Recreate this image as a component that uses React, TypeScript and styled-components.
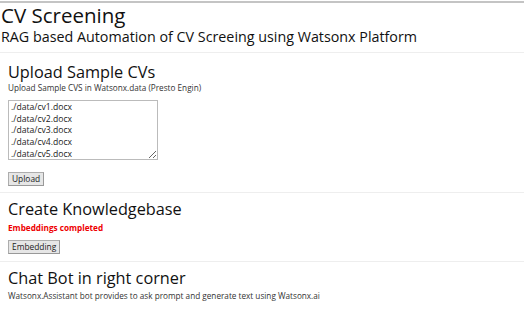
import styled, { createGlobalStyle } from 'styled-components';

const GlobalStyle = createGlobalStyle`
  html, body {
    margin: 0;
    padding: 0;
    background: #fff;
  }
  body {
    font-family: "Open Sans", "Noto Sans", sans-serif;
    color: #222;
  }
`;

const Page = styled.div`
  width: 524px;
  border-top: 2px solid #c4c4c4;
  margin-top: 1px;
`;

const Header = styled.header`
  padding: 0 0 6px 1px;
  border-bottom: 1px solid #eeeeee;
`;

const Title = styled.h1`
  margin: 0;
  font-size: 20.5px;
  font-weight: 400;
  line-height: 25px;
  color: #111;
`;

const Subtitle = styled.h2`
  margin: 0;
  font-size: 14.3px;
  font-weight: 400;
  line-height: 18px;
  color: #111;
`;

const Section = styled.section<{ $top: number; $bottom: number }>`
  padding: ${(p) => p.$top}px 0 ${(p) => p.$bottom}px 8px;
  border-bottom: 1px solid #eeeeee;
  display: flex;
  flex-direction: column;
  align-items: flex-start;

  &:last-child {
    border-bottom: none;
  }
`;

const SectionTitle = styled.h3`
  margin: 0;
  font-size: 16.3px;
  font-weight: 400;
  line-height: 21px;
  color: #111;
`;

const Note = styled.p<{ $alert?: boolean; $gap?: number }>`
  margin: ${(p) => p.$gap ?? 0}px 0 0;
  font-size: 8.2px;
  line-height: 10px;
  font-weight: ${(p) => (p.$alert ? 700 : 400)};
  color: ${(p) => (p.$alert ? '#ee0000' : '#333')};
  white-space: nowrap;
`;

const FileList = styled.textarea`
  margin-top: 7px;
  width: 150px;
  height: 60px;
  box-sizing: border-box;
  padding: 1px 2px;
  border: 1px solid #bbb;
  font-family: "Open Sans", sans-serif;
  font-size: 8.6px;
  line-height: 11.7px;
  color: #222;
  resize: vertical;
  overflow: hidden;
`;

const Button = styled.button<{ $gap: number }>`
  margin-top: ${(p) => p.$gap}px;
  padding: 0 3px;
  height: 14px;
  font-family: "Open Sans", sans-serif;
  font-size: 8.4px;
  line-height: 12px;
  color: #222;
  background: #e6e6e6;
  border: 1px solid #adadad;
  border-right-color: #999;
  border-bottom-color: #999;
  border-radius: 0;
  cursor: pointer;
`;

const files = ['./data/cv1.docx', './data/cv2.docx', './data/cv3.docx', './data/cv4.docx', './data/cv5.docx'];

const App = () => {
  return (
    <>
      <GlobalStyle />
      <Page>
        <Header>
          <Title>CV Screening</Title>
          <Subtitle>RAG based Automation of CV Screeing using Watsonx Platform</Subtitle>
        </Header>

        <Section $top={9} $bottom={6}>
          <SectionTitle>Upload Sample CVs</SectionTitle>
          <Note>Upload Sample CVS in Watsonx.data (Presto Engin)</Note>
          <FileList readOnly value={files.join('\n')} />
          <Button $gap={12}>Upload</Button>
        </Section>

        <Section $top={6} $bottom={7}>
          <SectionTitle>Create Knowledgebase</SectionTitle>
          <Note $alert $gap={3}>Embeddings completed</Note>
          <Button $gap={7}>Embedding</Button>
        </Section>

        <Section $top={6} $bottom={0}>
          <SectionTitle>Chat Bot in right corner</SectionTitle>
          <Note $gap={2}>Watsonx.Assistant bot provides to ask prompt and generate text using Watsonx.ai</Note>
        </Section>
      </Page>
    </>
  );
};

export default App;
